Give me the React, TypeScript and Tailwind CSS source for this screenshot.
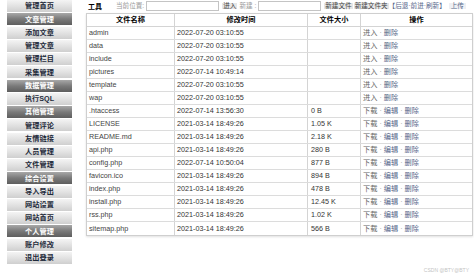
import React from "react";

type Item = { label: string; head?: boolean };

const MENU: Item[] = [
  { label: "管理首页" },
  { label: "文章管理", head: true },
  { label: "添加文章" },
  { label: "管理文章" },
  { label: "管理栏目" },
  { label: "采集管理" },
  { label: "数据管理", head: true },
  { label: "执行SQL" },
  { label: "其他管理", head: true },
  { label: "管理评论" },
  { label: "友情链接" },
  { label: "人员管理" },
  { label: "文件管理" },
  { label: "综合设置", head: true },
  { label: "导入导出" },
  { label: "网站设置" },
  { label: "网站首页" },
  { label: "个人管理", head: true },
  { label: "账户修改" },
  { label: "退出登录" },
];

type Row = { name: string; time: string; size?: string };

const ROWS: Row[] = [
  { name: "admin", time: "2022-07-20 03:10:55" },
  { name: "data", time: "2022-07-20 03:10:55" },
  { name: "include", time: "2022-07-20 03:10:55" },
  { name: "pictures", time: "2022-07-14 10:49:14" },
  { name: "template", time: "2022-07-20 03:10:55" },
  { name: "wap", time: "2022-07-20 03:10:55" },
  { name: ".htaccess", time: "2022-07-14 13:56:30", size: "0 B" },
  { name: "LICENSE", time: "2021-03-14 18:49:26", size: "1.05 K" },
  { name: "README.md", time: "2021-03-14 18:49:26", size: "2.18 K" },
  { name: "api.php", time: "2021-03-14 18:49:26", size: "280 B" },
  { name: "config.php", time: "2022-07-14 10:50:04", size: "877 B" },
  { name: "favicon.ico", time: "2021-03-14 18:49:26", size: "894 B" },
  { name: "index.php", time: "2021-03-14 18:49:26", size: "478 B" },
  { name: "install.php", time: "2021-03-14 18:49:26", size: "12.45 K" },
  { name: "rss.php", time: "2021-03-14 18:49:26", size: "1.02 K" },
  { name: "sitemap.php", time: "2021-03-14 18:49:26", size: "566 B" },
];

function Sidebar() {
  return (
    <div className="w-[86px] shrink-0 pl-[7px] pr-[14px] flex flex-col gap-[1.26px]">
      {MENU.map(m => (
        <div key={m.label}
          className={
            m.head
              ? "h-[12px] flex items-center justify-center font-bold text-white bg-gradient-to-b from-[#a8a8a8] via-[#7a7a7a] to-[#5e5e5e]"
              : "h-[12px] flex items-center justify-center font-bold text-[#1e2a3a] bg-gradient-to-b from-[#f4f4f4] via-[#e2e2e2] to-[#cfcfcf]"
          }>
          {m.label}
        </div>
      ))}
    </div>
  );
}

function Toolbar() {
  return (
    <div className="h-[12px] flex items-center whitespace-nowrap text-[6.6px]">
      <span className="font-bold text-black ml-[2px] mr-[14px] text-[7px]">工具</span>
      <span className="text-[#999]">当前位置:</span>
      <div className="ml-[2px] w-[73px] h-[10px] border border-[#c4c4c4] bg-white" />
      <span className="ml-[3px] px-[1px] bg-[#e6e6e6] text-[#444]">进入</span>
      <span className="ml-[2px] text-[#999]">新建 :</span>
      <div className="ml-[2px] w-[63px] h-[10px] border border-[#c4c4c4] bg-white" />
      <span className="ml-[3px] px-[1px] bg-[#e6e6e6] text-[#444]">新建文件</span>
      <span className="ml-[1px] px-[1px] bg-[#e6e6e6] text-[#444]">新建文件夹</span>
      <span className="text-[#5a6a8c]">【后退·前进·刷新】</span>
      <span className="ml-[3px] px-[2px] bg-[#eef0f4] text-[#5a6a8c]">上传</span>
    </div>
  );
}

function Ops({ dir }: { dir: boolean }) {
  if (dir)
    return (
      <span><span className="text-[#666]">进入</span><span className="text-[#999]"> · </span><span className="text-[#556688]">删除</span></span>
    );
  return (
    <span>
      <span className="text-[#666]">下载</span><span className="text-[#999]"> · </span>
      <span className="text-[#556688]">编辑</span><span className="text-[#999]"> · </span>
      <span className="text-[#556688]">删除</span>
    </span>
  );
}

export default function App() {
  return (
    <div className="relative w-[474px] h-[277px] bg-white flex overflow-hidden text-[7.2px] leading-none"
      style={{ fontFamily: '"Liberation Sans", Arial, "Noto Sans CJK SC", sans-serif' }}>
      <Sidebar />
      <div className="flex-1 flex flex-col">
        <Toolbar />
        <div className="mt-[1px] w-[387px] border border-[#cfcfcf] shadow-[0_1px_2px_rgba(0,0,0,0.12)]">
          <div className="grid grid-cols-[88px_133px_53px_1fr] h-[13px] font-bold text-black border-b border-[#d4d4d4]">
            <div className="flex items-center justify-center border-r border-[#d4d4d4]">文件名称</div>
            <div className="flex items-center justify-center border-r border-[#d4d4d4]">修改时间</div>
            <div className="flex items-center justify-center border-r border-[#d4d4d4]">文件大小</div>
            <div className="flex items-center justify-center">操作</div>
          </div>
          {ROWS.map((r, i) => (
            <div key={r.name}
              className={`grid grid-cols-[88px_133px_53px_1fr] h-[13px] text-[#333] ${i < ROWS.length - 1 ? "border-b border-[#dcdcdc]" : ""}`}>
              <div className="flex items-center pl-[2px] border-r border-[#d4d4d4] text-[#444]">{r.name}</div>
              <div className="flex items-center pl-[2px] border-r border-[#d4d4d4]">{r.time}</div>
              <div className="flex items-center pl-[3px] border-r border-[#d4d4d4]">{r.size ?? ""}</div>
              <div className="flex items-center pl-[2px]"><Ops dir={!r.size} /></div>
            </div>
          ))}
        </div>
      </div>
      <div className="absolute right-[5px] bottom-[4px] text-[5px] text-[#c4c4c4]">CSDN @BTY@BTY</div>
    </div>
  );
}
